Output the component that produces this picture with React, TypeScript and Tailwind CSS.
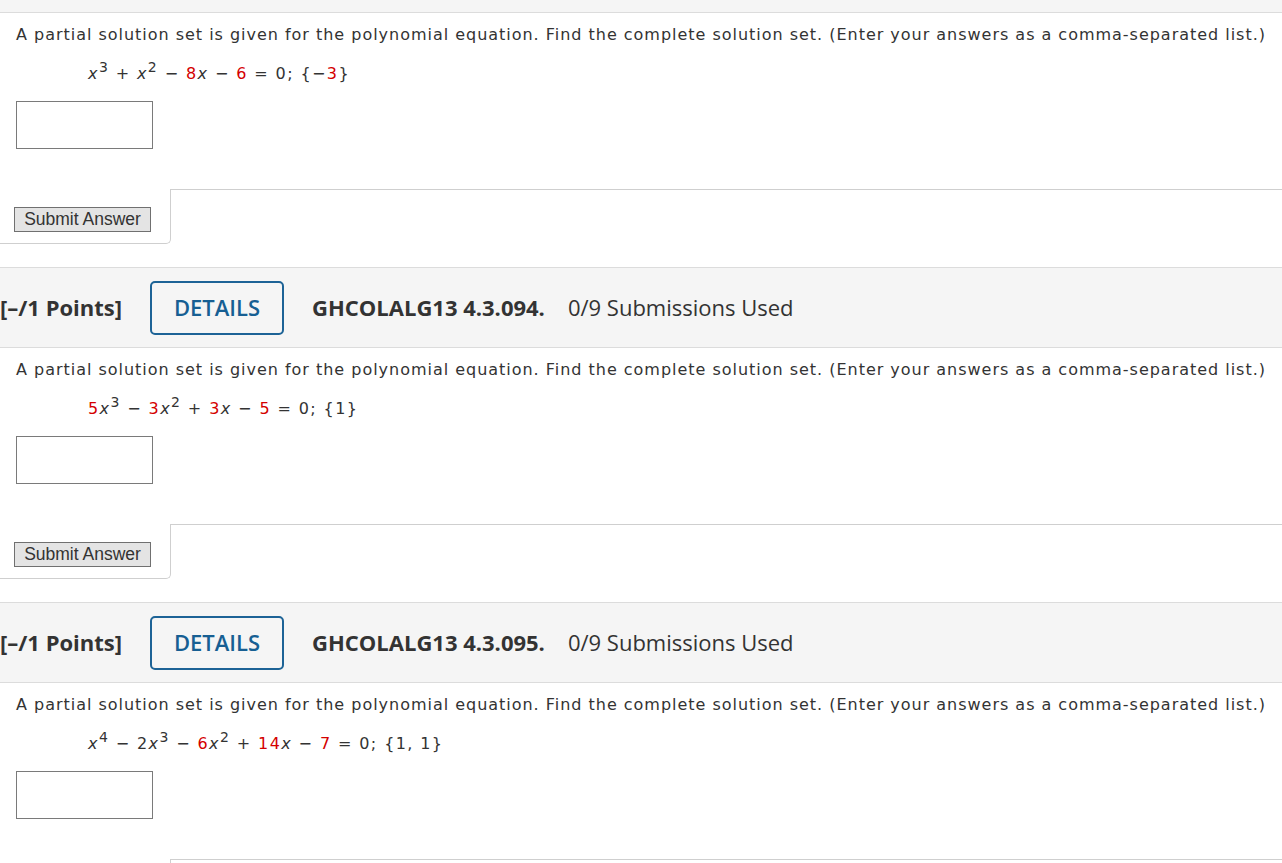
import React from "react";

type Part = { t: string; red?: boolean; x?: boolean; sup?: string };

type Question = {
  code: string;
  eq: Part[];
};

const questions: Question[] = [
  {
    code: "GHCOLALG13 4.3.093.",
    eq: [
      { t: "", x: true, sup: "3" },
      { t: " + " },
      { t: "", x: true, sup: "2" },
      { t: " − " },
      { t: "8", red: true },
      { t: "", x: true },
      { t: " − " },
      { t: "6", red: true },
      { t: " = 0; {−" },
      { t: "3", red: true },
      { t: "}" },
    ],
  },
  {
    code: "GHCOLALG13 4.3.094.",
    eq: [
      { t: "5", red: true },
      { t: "", x: true, sup: "3" },
      { t: " − " },
      { t: "3", red: true },
      { t: "", x: true, sup: "2" },
      { t: " + " },
      { t: "3", red: true },
      { t: "", x: true },
      { t: " − " },
      { t: "5", red: true },
      { t: " = 0; {1}" },
    ],
  },
  {
    code: "GHCOLALG13 4.3.095.",
    eq: [
      { t: "", x: true, sup: "4" },
      { t: " − 2" },
      { t: "", x: true, sup: "3" },
      { t: " − " },
      { t: "6", red: true },
      { t: "", x: true, sup: "2" },
      { t: " + " },
      { t: "14", red: true },
      { t: "", x: true },
      { t: " − " },
      { t: "7", red: true },
      { t: " = 0; {1, 1}" },
    ],
  },
];

const Header: React.FC<{ code: string }> = ({ code }) => (
  <div className="h-[81px] bg-[#f5f5f5] border-y border-[#dcdcdc] flex items-center font-['Open_Sans',sans-serif] text-[22px] text-[#333]">
    <span className="font-bold">[–/1 Points]</span>
    <button className="ml-[28px] w-[134px] h-[54px] border-2 border-[#1d6396] rounded-[5px] text-[#175f93] font-semibold">
      DETAILS
    </button>
    <span className="ml-[28px] font-bold">{code}</span>
    <span className="ml-[23px]">0/9 Submissions Used</span>
  </div>
);

const Equation: React.FC<{ parts: Part[] }> = ({ parts }) => (
  <div className="ml-[88px] mt-[15px] h-[24px] leading-[24px] whitespace-pre tracking-[1.4px]">
    {parts.map((p, i) => (
      <span key={i}>
        {p.t && <span className={p.red ? "text-[#d40000]" : ""}>{p.t}</span>}
        {p.x && <span className="italic">x</span>}
        {p.sup && <sup className="text-[14px] relative -top-[7px]">{p.sup}</sup>}
      </span>
    ))}
  </div>
);

const Body: React.FC<{ q: Question; last?: boolean }> = ({ q, last }) => (
  <div className="pt-[10px] font-['DejaVu_Sans',Verdana,sans-serif] text-[16px] text-[#333]">
    <p className="ml-[16px] leading-[24px] tracking-[0.98px] whitespace-nowrap">
      A partial solution set is given for the polynomial equation. Find the complete solution set. (Enter your answers as a comma-separated list.)
    </p>
    <Equation parts={q.eq} />
    <input
      type="text"
      className="block mt-[15px] ml-[16px] w-[137px] h-[48px] border border-[#7a7a7a] bg-white outline-none"
    />
    <div className="mt-[40px] flex">
      <div className="w-[171px] h-[55px] border-r border-b border-[#cfcfcf] rounded-br-[5px] pl-[14px] pt-[18px]">
        <button className="w-[137px] h-[25px] border border-[#707070] bg-[#e4e4e4] font-['Liberation_Sans',Arial,sans-serif] text-[17.5px] leading-[23px] text-[#333]">
          Submit Answer
        </button>
      </div>
      <div className="flex-1 border-t border-[#cfcfcf]" />
    </div>
    {!last && <div className="h-[23px]" />}
  </div>
);

export default function App() {
  return (
    <div className="w-[1282px] h-[863px] overflow-hidden bg-white">
      <div className="-mt-[68px]">
        <Header code="GHCOLALG13 4.3.093." />
        <Body q={questions[0]} />
        <Header code={questions[1].code} />
        <Body q={questions[1]} />
        <Header code={questions[2].code} />
        <Body q={questions[2]} last />
      </div>
    </div>
  );
}
